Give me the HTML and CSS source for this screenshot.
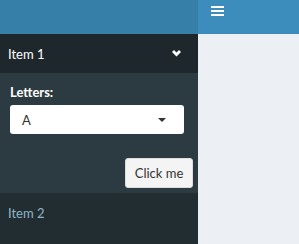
FILE: index.html
```html
<!DOCTYPE html>
<html>
<head>
<meta charset="utf-8">
<link rel="stylesheet" href="styles.css">
</head>
<body>
<div class="app">
  <div class="logo"></div>
  <div class="navbar">
    <span class="toggle"><span></span><span></span><span></span></span>
  </div>
  <aside class="sidebar">
    <div class="item active">
      <span>Item 1</span>
      <svg class="chev" width="9" height="7" viewBox="0 0 9 7"><path d="M0 2 L2 0 L4.5 2.6 L7 0 L9 2 L4.5 6.5 Z" fill="#fff"/></svg>
    </div>
    <div class="submenu">
      <label class="lbl">Letters:</label>
      <div class="select"><span>A</span><span class="caret"></span></div>
      <div class="btnrow"><button class="btn">Click me</button></div>
    </div>
    <div class="item">Item 2</div>
  </aside>
  <main class="content"></main>
</div>
</body>
</html>
```
FILE: styles.css
```css
html, body { margin: 0; padding: 0; height: 100%; }
body { font-family: Lato, "Liberation Sans", sans-serif; font-size: 13px; background: #ecf0f5; }
.app {
  display: grid;
  grid-template-columns: 198px 1fr;
  grid-template-rows: 34px 1fr;
  height: 244px;
}
.logo { background: #367fa9; }
.navbar { background: #3c8dbc; display: flex; align-items: flex-start; }
.toggle { display: flex; flex-direction: column; gap: 2px; margin: 6px 0 0 13px; }
.toggle span { display: block; width: 13px; height: 2px; background: #fff; }
.sidebar { background: #222d32; }
.item {
  height: 39px; display: flex; align-items: center; justify-content: space-between;
  padding: 0 17px 0 8px; color: #8fb6c8; box-sizing: border-box;
}
.item.active { background: #1e282c; color: #fff; }
.submenu { background: #2c3b41; height: 120px; padding: 12px 5px 0 10px; box-sizing: border-box; }
.lbl { display: block; color: #fff; font-weight: bold; font-size: 13px; line-height: 15px; margin-bottom: 5px; }
.select {
  width: 174px; height: 29px; box-sizing: border-box; background: #fff; border-radius: 3px;
  display: flex; align-items: center; justify-content: space-between; padding: 0 18px 0 12px;
  color: #333; font-size: 13px;
}
.caret { width: 0; height: 0; border-left: 4px solid transparent; border-right: 4px solid transparent; border-top: 4px solid #333; }
.btnrow { display: flex; justify-content: flex-end; margin-top: 24px; }
.btn {
  width: 68px; height: 30px; font: 13px Lato, sans-serif; color: #333; background: #f4f4f4;
  border: 1px solid #ddd; border-radius: 3px; padding: 0;
}
.content { background: #ecf0f5; }
```
